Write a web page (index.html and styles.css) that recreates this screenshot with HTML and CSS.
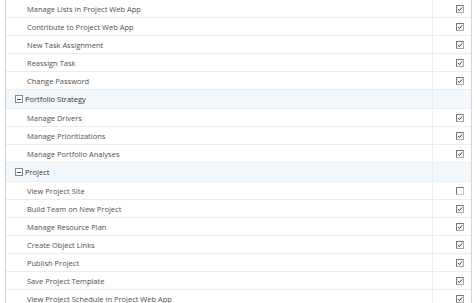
FILE: index.html
```html
<!DOCTYPE html>
<html>
<head>
<meta charset="utf-8">
<link rel="stylesheet" href="styles.css">
</head>
<body>
<div class="grid">
  <div class="row"><div class="name">Manage Lists in Project Web App</div><div class="check"><svg class="cb" width="8" height="8" viewBox="0 0 8 8"><rect x="0.5" y="0.5" width="7" height="7" fill="#fbfbfb" stroke="#a8a8a8"/><path d="M0.5 7.5V0.5H7.5" fill="none" stroke="#767676"/><path d="M2 4 L3.4 5.6 L6.2 2.4" fill="none" stroke="#3a3a3a" stroke-width="1"/></svg></div></div>
  <div class="row"><div class="name">Contribute to Project Web App</div><div class="check"><svg class="cb" width="8" height="8" viewBox="0 0 8 8"><rect x="0.5" y="0.5" width="7" height="7" fill="#fbfbfb" stroke="#a8a8a8"/><path d="M0.5 7.5V0.5H7.5" fill="none" stroke="#767676"/><path d="M2 4 L3.4 5.6 L6.2 2.4" fill="none" stroke="#3a3a3a" stroke-width="1"/></svg></div></div>
  <div class="row"><div class="name">New Task Assignment</div><div class="check"><svg class="cb" width="8" height="8" viewBox="0 0 8 8"><rect x="0.5" y="0.5" width="7" height="7" fill="#fbfbfb" stroke="#a8a8a8"/><path d="M0.5 7.5V0.5H7.5" fill="none" stroke="#767676"/><path d="M2 4 L3.4 5.6 L6.2 2.4" fill="none" stroke="#3a3a3a" stroke-width="1"/></svg></div></div>
  <div class="row"><div class="name">Reassign Task</div><div class="check"><svg class="cb" width="8" height="8" viewBox="0 0 8 8"><rect x="0.5" y="0.5" width="7" height="7" fill="#fbfbfb" stroke="#a8a8a8"/><path d="M0.5 7.5V0.5H7.5" fill="none" stroke="#767676"/><path d="M2 4 L3.4 5.6 L6.2 2.4" fill="none" stroke="#3a3a3a" stroke-width="1"/></svg></div></div>
  <div class="row"><div class="name">Change Password</div><div class="check"><svg class="cb" width="8" height="8" viewBox="0 0 8 8"><rect x="0.5" y="0.5" width="7" height="7" fill="#fbfbfb" stroke="#a8a8a8"/><path d="M0.5 7.5V0.5H7.5" fill="none" stroke="#767676"/><path d="M2 4 L3.4 5.6 L6.2 2.4" fill="none" stroke="#3a3a3a" stroke-width="1"/></svg></div></div>
  <div class="row group"><div class="name"><svg class="tog" width="8" height="8" viewBox="0 0 8 8"><rect x="0.5" y="0.5" width="7" height="7" fill="#fff" stroke="#8a8a8a"/><path d="M2 4.5H6" stroke="#555"/></svg>Portfolio Strategy</div><div class="check"></div></div>
  <div class="row"><div class="name">Manage Drivers</div><div class="check"><svg class="cb" width="8" height="8" viewBox="0 0 8 8"><rect x="0.5" y="0.5" width="7" height="7" fill="#fbfbfb" stroke="#a8a8a8"/><path d="M0.5 7.5V0.5H7.5" fill="none" stroke="#767676"/><path d="M2 4 L3.4 5.6 L6.2 2.4" fill="none" stroke="#3a3a3a" stroke-width="1"/></svg></div></div>
  <div class="row"><div class="name">Manage Prioritizations</div><div class="check"><svg class="cb" width="8" height="8" viewBox="0 0 8 8"><rect x="0.5" y="0.5" width="7" height="7" fill="#fbfbfb" stroke="#a8a8a8"/><path d="M0.5 7.5V0.5H7.5" fill="none" stroke="#767676"/><path d="M2 4 L3.4 5.6 L6.2 2.4" fill="none" stroke="#3a3a3a" stroke-width="1"/></svg></div></div>
  <div class="row"><div class="name">Manage Portfolio Analyses</div><div class="check"><svg class="cb" width="8" height="8" viewBox="0 0 8 8"><rect x="0.5" y="0.5" width="7" height="7" fill="#fbfbfb" stroke="#a8a8a8"/><path d="M0.5 7.5V0.5H7.5" fill="none" stroke="#767676"/><path d="M2 4 L3.4 5.6 L6.2 2.4" fill="none" stroke="#3a3a3a" stroke-width="1"/></svg></div></div>
  <div class="row group"><div class="name"><svg class="tog" width="8" height="8" viewBox="0 0 8 8"><rect x="0.5" y="0.5" width="7" height="7" fill="#fff" stroke="#8a8a8a"/><path d="M2 4.5H6" stroke="#555"/></svg>Project</div><div class="check"></div></div>
  <div class="row"><div class="name">View Project Site</div><div class="check"><svg class="cb" width="8" height="8" viewBox="0 0 8 8"><rect x="0.5" y="0.5" width="7" height="7" fill="#fbfbfb" stroke="#c4c4c4"/><path d="M0.5 7.5V0.5H7.5" fill="none" stroke="#767676"/></svg></div></div>
  <div class="row"><div class="name">Build Team on New Project</div><div class="check"><svg class="cb" width="8" height="8" viewBox="0 0 8 8"><rect x="0.5" y="0.5" width="7" height="7" fill="#fbfbfb" stroke="#a8a8a8"/><path d="M0.5 7.5V0.5H7.5" fill="none" stroke="#767676"/><path d="M2 4 L3.4 5.6 L6.2 2.4" fill="none" stroke="#3a3a3a" stroke-width="1"/></svg></div></div>
  <div class="row"><div class="name">Manage Resource Plan</div><div class="check"><svg class="cb" width="8" height="8" viewBox="0 0 8 8"><rect x="0.5" y="0.5" width="7" height="7" fill="#fbfbfb" stroke="#a8a8a8"/><path d="M0.5 7.5V0.5H7.5" fill="none" stroke="#767676"/><path d="M2 4 L3.4 5.6 L6.2 2.4" fill="none" stroke="#3a3a3a" stroke-width="1"/></svg></div></div>
  <div class="row"><div class="name">Create Object Links</div><div class="check"><svg class="cb" width="8" height="8" viewBox="0 0 8 8"><rect x="0.5" y="0.5" width="7" height="7" fill="#fbfbfb" stroke="#a8a8a8"/><path d="M0.5 7.5V0.5H7.5" fill="none" stroke="#767676"/><path d="M2 4 L3.4 5.6 L6.2 2.4" fill="none" stroke="#3a3a3a" stroke-width="1"/></svg></div></div>
  <div class="row"><div class="name">Publish Project</div><div class="check"><svg class="cb" width="8" height="8" viewBox="0 0 8 8"><rect x="0.5" y="0.5" width="7" height="7" fill="#fbfbfb" stroke="#a8a8a8"/><path d="M0.5 7.5V0.5H7.5" fill="none" stroke="#767676"/><path d="M2 4 L3.4 5.6 L6.2 2.4" fill="none" stroke="#3a3a3a" stroke-width="1"/></svg></div></div>
  <div class="row"><div class="name">Save Project Template</div><div class="check"><svg class="cb" width="8" height="8" viewBox="0 0 8 8"><rect x="0.5" y="0.5" width="7" height="7" fill="#fbfbfb" stroke="#a8a8a8"/><path d="M0.5 7.5V0.5H7.5" fill="none" stroke="#767676"/><path d="M2 4 L3.4 5.6 L6.2 2.4" fill="none" stroke="#3a3a3a" stroke-width="1"/></svg></div></div>
  <div class="row"><div class="name">View Project Schedule in Project Web App</div><div class="check"><svg class="cb" width="8" height="8" viewBox="0 0 8 8"><rect x="0.5" y="0.5" width="7" height="7" fill="#fbfbfb" stroke="#a8a8a8"/><path d="M0.5 7.5V0.5H7.5" fill="none" stroke="#767676"/><path d="M2 4 L3.4 5.6 L6.2 2.4" fill="none" stroke="#3a3a3a" stroke-width="1"/></svg></div></div>
</div>
</body>
</html>
```

FILE: styles.css
```css
html, body {
  margin: 0;
  padding: 0;
  background: #fff;
  overflow: hidden;
}

.grid {
  margin-left: 5px;
  width: 467px;
  box-sizing: border-box;
  border-left: 1px solid #d6d6d6;
  border-right: 1px solid #d6d6d6;
  font-family: "Open Sans", "Liberation Sans", sans-serif;
  font-size: 7.5px;
  color: #505050;
}

.row {
  display: flex;
  height: 18px;
  box-sizing: border-box;
  border-bottom: 1px solid #ececec;
}

.name {
  flex: 1;
  display: flex;
  align-items: center;
  padding-left: 21px;
  white-space: nowrap;
  overflow: hidden;
}

.check {
  width: 39px;
  box-sizing: border-box;
  border-left: 1px solid #efefef;
  display: flex;
  align-items: center;
  justify-content: flex-end;
  padding-right: 7px;
}

.cb {
  display: block;
}

.group {
  height: 19px;
  background: #f2f7fc;
  border-bottom-color: #e6edf5;
}

.group .name {
  padding-left: 9px;
  color: #363636;
}

.group .check {
  border-left-color: #e6edf5;
}

.tog {
  display: block;
  margin-right: 2px;
}
```
